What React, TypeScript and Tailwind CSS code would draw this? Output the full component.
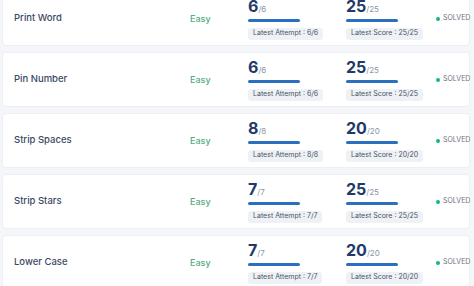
const rows = [
  { name: 'Print Word', attempts: 6, score: 25, max: 25 },
  { name: 'Pin Number', attempts: 6, score: 25, max: 25 },
  { name: 'Strip Spaces', attempts: 8, score: 20, max: 20 },
  { name: 'Strip Stars', attempts: 7, score: 25, max: 25 },
  { name: 'Lower Case', attempts: 7, score: 20, max: 20 },
];

function Stat({ value, max, label }: { value: number; max: number; label: string }) {
  return (
    <div className="flex flex-col items-start">
      <div className="flex items-baseline leading-[16px]">
        <span className="text-[16px] font-bold text-[#1f3a68]">{value}</span>
        <span className="text-[8px] text-[#8a94a6]">/{max}</span>
      </div>
      <div className="mt-[2px] h-[3px] w-[52px] rounded-full bg-[#2b70c0]" />
      <div className="mt-[6px] flex h-[12px] items-center rounded-[3px] bg-[#eef1f6] px-[5px] text-[7px] text-[#4b5563]">
        {label}
      </div>
    </div>
  );
}

export default function App() {
  return (
    <div className="h-[286px] w-[474px] overflow-hidden bg-[#f4f6fa] font-['Inter',sans-serif]">
      <div className="-mt-[9px] flex flex-col gap-[6px] pl-[2px] pr-[4px]">
        {rows.map((r) => (
          <div
            key={r.name}
            className="grid h-[55px] grid-cols-[176px_58px_98px_90px_1fr] items-center rounded-[4px] border border-[#eceff4] bg-white pl-[11px]"
          >
            <span className="text-[9.5px] font-medium text-[#3b4a63]">{r.name}</span>
            <span className="text-[9px] font-medium text-[#52ac84]">Easy</span>
            <Stat value={r.attempts} max={r.attempts} label={`Latest Attempt : ${r.attempts}/${r.attempts}`} />
            <Stat value={r.score} max={r.max} label={`Latest Score : ${r.score}/${r.max}`} />
            <div className="flex items-center gap-[3px]">
              <span className="h-[4px] w-[4px] rounded-full bg-[#10b981]" />
              <span className="text-[7px] uppercase text-[#6b7280]">Solved</span>
            </div>
          </div>
        ))}
      </div>
    </div>
  );
}
